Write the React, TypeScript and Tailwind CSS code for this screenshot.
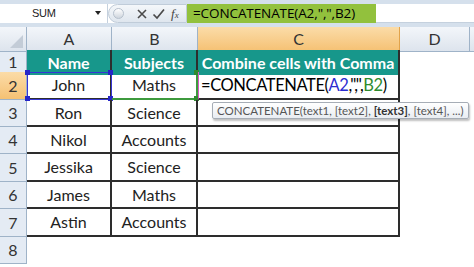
import React from 'react'

const rows = [
  { n: 2, name: 'John', subject: 'Maths' },
  { n: 3, name: 'Ron', subject: 'Science' },
  { n: 4, name: 'Nikol', subject: 'Accounts' },
  { n: 5, name: 'Jessika', subject: 'Science' },
  { n: 6, name: 'James', subject: 'Maths' },
  { n: 7, name: 'Astin', subject: 'Accounts' },
]

const heights: Record<number, string> = {
  2: 'h-[28px]',
  3: 'h-[27px]',
  4: 'h-[27px]',
  5: 'h-[28px]',
  6: 'h-[27px]',
  7: 'h-[28px]',
}

const cols = 'grid grid-cols-[27px_85px_86px_202px_70px_1fr]'

function Handle({ className }: { className: string }) {
  return <span className={`absolute w-[5px] h-[5px] ${className}`} />
}

export default function App() {
  return (
    <div className="w-[474px] h-[267px] overflow-hidden bg-white font-['Lato','Open_Sans',sans-serif] text-[#222]">
      {/* formula bar */}
      <div className="h-[4px] bg-[#d5e0ec]" />
      <div className="flex h-[19px] items-stretch bg-white">
        <div className="relative flex w-[108px] items-center border-r border-[#c5d1de]">
          <span className="ml-[32px] text-[11px] tracking-tight text-[#222] font-['Liberation_Sans',sans-serif]">SUM</span>
          <span className="absolute left-[95px] top-[7px] h-0 w-0 border-x-[3.5px] border-t-[4px] border-x-transparent border-t-[#222]" />
        </div>
        <div className="flex w-[79px] items-center rounded-l-full bg-gradient-to-b from-[#f4f7fa] to-[#dfe6ee] border border-[#c0ccd9]">
          <span className="ml-[4px] h-[11px] w-[11px] rounded-full border border-[#b6c0cc] bg-gradient-to-b from-white to-[#cfd6de]" />
          <svg width="12" height="12" viewBox="0 0 12 12" className="ml-[12px]">
            <path d="M2 2 L10 10 M10 2 L2 10" stroke="#4a4a4a" strokeWidth="1.6" />
          </svg>
          <svg width="13" height="12" viewBox="0 0 13 12" className="ml-[4px]">
            <path d="M1.5 6.5 L5 10 L12 1.5" stroke="#4a4a4a" strokeWidth="1.7" fill="none" />
          </svg>
          <span className="ml-[6px] font-['Liberation_Serif',serif] italic text-[13px] leading-none text-[#444]">
            f<span className="text-[9px]">x</span>
          </span>
        </div>
        <div className="flex w-[189px] items-center bg-[#92c13d] pl-[6px] text-[13.5px] font-['Open_Sans',sans-serif] tracking-[-0.1px] text-black">
          =CONCATENATE(A2,&quot;,&quot;,B2)
        </div>
        <div className="flex-1 border-b border-[#c5d1de]" />
      </div>
      <div className="h-[4px] bg-[#d5e0ec]" />

      {/* column headers */}
      <div className={`${cols} h-[23px] text-[16px] text-[#333]`}>
        <div className="relative border-r border-b border-[#9fb3c8] bg-gradient-to-b from-[#f3f6fa] to-[#dde4ed]">
          <svg className="absolute right-[3px] bottom-[3px]" width="13" height="13" viewBox="0 0 13 13">
            <path d="M13 0 L13 13 L0 13 Z" fill="#c3ccd7" />
          </svg>
        </div>
        <div className="flex items-center justify-center border-r border-b border-[#9fb3c8] bg-gradient-to-b from-[#f3f6fa] to-[#dde4ed]">A</div>
        <div className="flex items-center justify-center border-r border-b border-[#9fb3c8] bg-gradient-to-b from-[#f3f6fa] to-[#dde4ed]">B</div>
        <div className="flex items-center justify-center border-r border-b border-[#e2a34a] bg-gradient-to-b from-[#fbdca8] to-[#f5c173]">C</div>
        <div className="flex items-center justify-center border-r border-b border-[#9fb3c8] bg-gradient-to-b from-[#f3f6fa] to-[#dde4ed]">D</div>
        <div className="border-b border-[#9fb3c8] bg-gradient-to-b from-[#f3f6fa] to-[#dde4ed]" />
      </div>

      {/* row 1 header */}
      <div className={`${cols} h-[22px] text-[16px]`}>
        <div className="flex items-center justify-center border-r border-b border-[#9fb3c8] bg-[#e4ebf4] text-[#333]">1</div>
        <div className="flex items-center justify-center border-r-2 border-[#2d2d2d] bg-[#17978b] font-bold text-white">Name</div>
        <div className="flex items-center justify-center border-r-2 border-[#2d2d2d] bg-[#17978b] font-bold text-white">Subjects</div>
        <div className="flex items-center justify-center border-r-2 border-[#2d2d2d] bg-[#17978b] font-bold text-white">Combine cells with Comma</div>
        <div />
        <div />
      </div>

      {/* data rows */}
      {rows.map((r) => (
        <div key={r.n} className={`${cols} ${heights[r.n]} text-[16px]`}>
          <div
            className={`flex items-center justify-center border-r border-b border-[#9fb3c8] text-[#333] ${
              r.n === 2 ? 'bg-gradient-to-b from-[#fbdca8] to-[#f5c173]' : 'bg-[#e4ebf4]'
            }`}
          >
            {r.n}
          </div>
          <div
            className={`relative flex items-center justify-center border-r-2 border-b-2 border-[#2d2d2d] ${
              r.n === 2 ? 'outline-[1.5px] outline-[#3535d4] -outline-offset-1' : ''
            }`}
          >
            {r.name}
            {r.n === 2 && (
              <>
                <Handle className="-left-[2px] -top-[2px] bg-[#2525c8]" />
                <Handle className="-right-[3px] -top-[2px] bg-[#2525c8]" />
                <Handle className="-left-[2px] -bottom-[3px] bg-[#2525c8]" />
                <Handle className="-right-[3px] -bottom-[3px] bg-[#2525c8]" />
              </>
            )}
          </div>
          <div
            className={`relative flex items-center justify-center border-r-2 border-b-2 ${
              r.n === 2 ? 'border-b-[#3d9a3d] border-r-[#3d9a3d]' : 'border-[#2d2d2d]'
            }`}
          >
            {r.subject}
            {r.n === 2 && (
              <>
                <Handle className="-right-[3px] -top-[2px] bg-[#2f8a2f]" />
                <Handle className="-right-[3px] -bottom-[3px] bg-[#2f8a2f]" />
              </>
            )}
          </div>
          <div
            className={`relative flex items-center border-r-2 border-b-2 border-[#2d2d2d] ${
              r.n === 2 ? 'border-l border-l-[#d65bc4]' : ''
            }`}
          >
            {r.n === 2 && (
              <>
                <span className="whitespace-nowrap pl-[2px] text-[16.5px] tracking-[-0.4px] font-['Lato',sans-serif] text-black">
                  =CONCATENATE(<span className="text-[#2b2bd0]">A2</span>,&quot;,&quot;,<span className="text-[#2e8b2e]">B2</span>)
                </span>
                <div className="absolute left-[13px] top-[30px] z-10 whitespace-nowrap rounded-[2px] border border-[#a6adb6] bg-gradient-to-b from-white to-[#e9edf2] px-[4px] py-[1px] text-[11.5px] leading-[13px] text-[#555] shadow-[1px_2px_2px_rgba(0,0,0,0.25)] font-['Lato',sans-serif]">
                  CONCATENATE(text1, [text2], <b className="text-[#333]">[text3]</b>, [text4], ...)
                </div>
              </>
            )}
          </div>
          <div />
          <div />
        </div>
      ))}

      {/* row 8 */}
      <div className={`${cols} h-[27px] text-[16px]`}>
        <div className="flex items-center justify-center border-r border-b border-[#9fb3c8] bg-[#e4ebf4] text-[#333]">8</div>
      </div>
    </div>
  )
}
